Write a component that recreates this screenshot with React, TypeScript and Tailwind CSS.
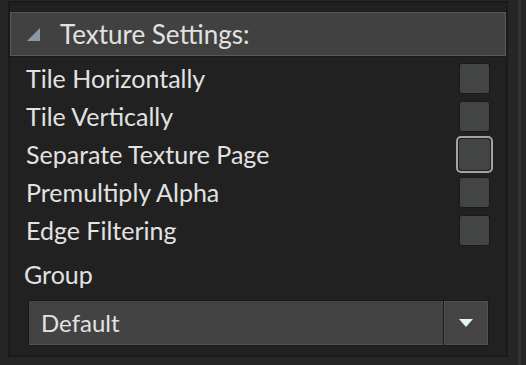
import { useState } from 'react';

const OPTIONS = [
  'Tile Horizontally',
  'Tile Vertically',
  'Separate Texture Page',
  'Premultiply Alpha',
  'Edge Filtering',
];

export default function App() {
  const [checked, setChecked] = useState<boolean[]>(OPTIONS.map(() => false));

  return (
    <div
      className="relative flex h-[365px] w-[526px] overflow-hidden bg-[#262626] text-[#e2e2e2]"
      style={{ fontFamily: "Lato, 'Open Sans', sans-serif" }}
    >
      <div className="w-[8px] shrink-0" />
      <div className="mt-[1px] flex h-[356px] w-[500px] shrink-0 flex-col border-x-2 border-y-2 border-[#1a1a1a] bg-[#212121]">
        {/* header */}
        <div className="mt-[8px] border-y border-[#1a1a1a]">
          <div className="flex h-[44px] items-center border border-[#5a5a5a] bg-[#414141]">
            <svg width="13" height="13" viewBox="0 0 13 13" className="ml-[16px]">
              <polygon points="13,0 13,13 0,13" fill="#8b97a3" />
            </svg>
            <span className="ml-[20px] text-[26px] leading-none">Texture Settings:</span>
          </div>
        </div>

        {/* options */}
        <div className="mt-[2px] flex flex-col">
          {OPTIONS.map((label, i) => (
            <div key={label} className="flex h-[38px] items-center justify-between pl-[16px] pr-[13px]">
              <span className="text-[25px] leading-none">{label}</span>
              <button
                onClick={() =>
                  setChecked((c) => c.map((v, j) => (j === i ? !v : v)))
                }
                className={
                  i === 2
                    ? 'flex h-[37px] w-[37px] items-center justify-center rounded-[5px] border-2 border-[#a3a3a3]'
                    : 'flex h-[37px] w-[37px] items-center justify-center rounded-[5px] border-2 border-transparent'
                }
              >
                <span
                  className={
                    i === 2
                      ? 'block h-[31px] w-[31px] rounded-[3px] bg-[#434544]'
                      : 'block h-[31px] w-[31px] rounded-[3px] border border-[#1a1a1a] bg-[#434544]'
                  }
                >
                  {checked[i] ? (
                    <svg viewBox="0 0 31 31" className="h-full w-full">
                      <path d="M8 16 L13 21 L23 10" stroke="#e2e2e2" strokeWidth="3" fill="none" />
                    </svg>
                  ) : null}
                </span>
              </button>
            </div>
          ))}
        </div>

        <div className="ml-[14px] mt-[13px] text-[25px] leading-none">Group</div>

        {/* dropdown */}
        <div className="ml-[18px] mt-[13px] flex h-[46px] w-[461px] border border-[#1a1a1a]">
          <div className="flex flex-1 items-center border-b border-[#555] bg-[#434343] pl-[12px] text-[24px]">
            Default
          </div>
          <div className="flex w-[45px] items-center justify-center border-l border-[#1a1a1a] bg-[#444] shadow-[inset_0_0_0_1px_#505050]">
            <svg width="14" height="8" viewBox="0 0 14 8">
              <polygon points="0,0 14,0 7,8" fill="#e6f4ee" />
            </svg>
          </div>
        </div>
      </div>
      <div className="w-[10px] shrink-0" />
      <div className="h-full w-[3px] shrink-0 bg-[#333333]" />
    </div>
  );
}
